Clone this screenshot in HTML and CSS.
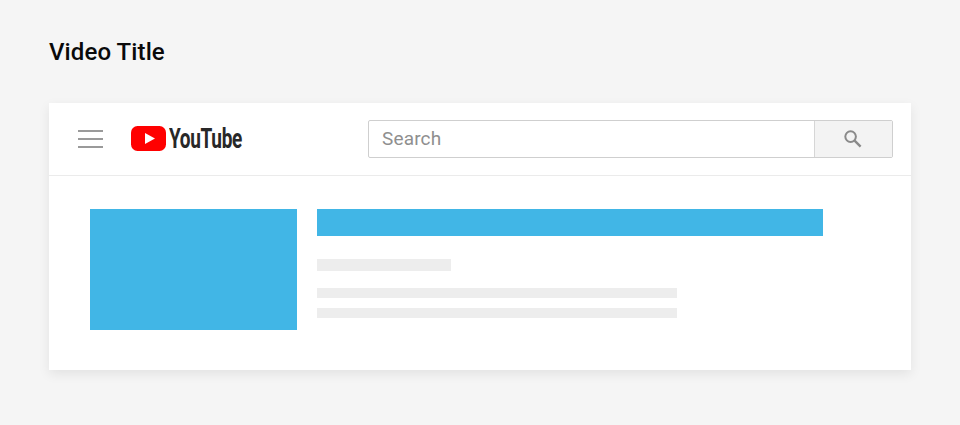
FILE: index.html
```html
<!DOCTYPE html>
<html lang="en">
<head>
    <meta charset="UTF-8">
    <meta name="viewport" content="width=device-width, initial-scale=1.0">
    <title>Video Title</title>
    <link rel="stylesheet" href="styles.css">
</head>
<body>
    <h1 class="page-title">Video Title</h1>

    <div class="card">
        <header class="topbar">
            <div class="menu-icon">
                <span></span>
                <span></span>
                <span></span>
            </div>
            <div class="logo">
                <svg class="logo-mark" width="35" height="25" viewBox="0 0 35 25">
                    <rect width="35" height="25" rx="6.5" fill="#ff0000"/>
                    <path d="M14 7 L24 12.5 L14 18 Z" fill="#fff"/>
                </svg>
                <span class="logo-text">YouTube</span>
            </div>
            <div class="search">
                <div class="search-input">Search</div>
                <div class="search-btn">
                    <svg width="20" height="20" viewBox="0 0 20 20" fill="none" stroke="#8a8a8a">
                        <circle cx="7.6" cy="7.6" r="5.3" stroke-width="2"/>
                        <path d="M11.6 11.6 L17.6 17.6" stroke-width="2.4"/>
                    </svg>
                </div>
            </div>
        </header>

        <div class="result">
            <div class="thumb"></div>
            <div class="info">
                <div class="info-title"></div>
                <div class="info-channel"></div>
                <div class="info-line"></div>
                <div class="info-line"></div>
            </div>
        </div>
    </div>
</body>
</html>
```

FILE: styles.css
```css
* {
    margin: 0;
    padding: 0;
    box-sizing: border-box;
}

body {
    height: 425px;
    padding: 39px 49px 0;
    background: #f5f5f5;
    font-family: Roboto, 'Liberation Sans', sans-serif;
    overflow: hidden;
}

.page-title {
    height: 26px;
    margin-bottom: 38px;
    font-size: 24px;
    line-height: 26px;
    font-weight: 500;
    letter-spacing: 0.1px;
    color: #0a0a0a;
}

/* card */
.card {
    width: 862px;
    height: 267px;
    background: #fff;
    box-shadow: 0 4px 11px rgba(0, 0, 0, 0.08);
}

.topbar {
    display: flex;
    align-items: center;
    height: 73px;
    padding: 0 18px 1px 29px;
    border-bottom: 1px solid #ebebeb;
}

.menu-icon {
    display: flex;
    flex-direction: column;
    gap: 6px;
    width: 25px;
    margin-right: 28px;
}

.menu-icon span {
    display: block;
    height: 2px;
    background: #9a9a9a;
}

.logo {
    display: flex;
    align-items: center;
    width: 237px;
}

.logo-mark {
    flex: none;
}

.logo-text {
    display: inline-block;
    margin-left: 3px;
    font-size: 28px;
    line-height: 30px;
    font-weight: 700;
    letter-spacing: -0.5px;
    color: #282828;
    transform: scaleX(0.68);
    transform-origin: left center;
}

/* search box */
.search {
    display: flex;
    width: 525px;
    height: 38px;
    border: 1px solid #cfcfcf;
    border-radius: 2px;
}

.search-input {
    flex: 1;
    padding-left: 13px;
    font-size: 19px;
    line-height: 35px;
    letter-spacing: 0.15px;
    color: #8f8f8f;
}

.search-btn {
    display: flex;
    align-items: center;
    justify-content: center;
    width: 78px;
    padding-right: 2px;
    background: #f3f3f3;
    border-left: 1px solid #d6d6d6;
}

/* video row */
.result {
    display: flex;
    gap: 20px;
    padding: 33px 0 0 41px;
}

.thumb {
    width: 207px;
    height: 121px;
    background: #41b6e6;
}

.info {
    display: flex;
    flex-direction: column;
}

.info-title {
    width: 506px;
    height: 27px;
    margin-bottom: 23px;
    background: #41b6e6;
}

.info-channel {
    width: 134px;
    height: 12px;
    margin-bottom: 17px;
    background: #ededed;
}

.info-line {
    width: 360px;
    height: 10px;
    margin-bottom: 10px;
    background: #ededed;
}
```
